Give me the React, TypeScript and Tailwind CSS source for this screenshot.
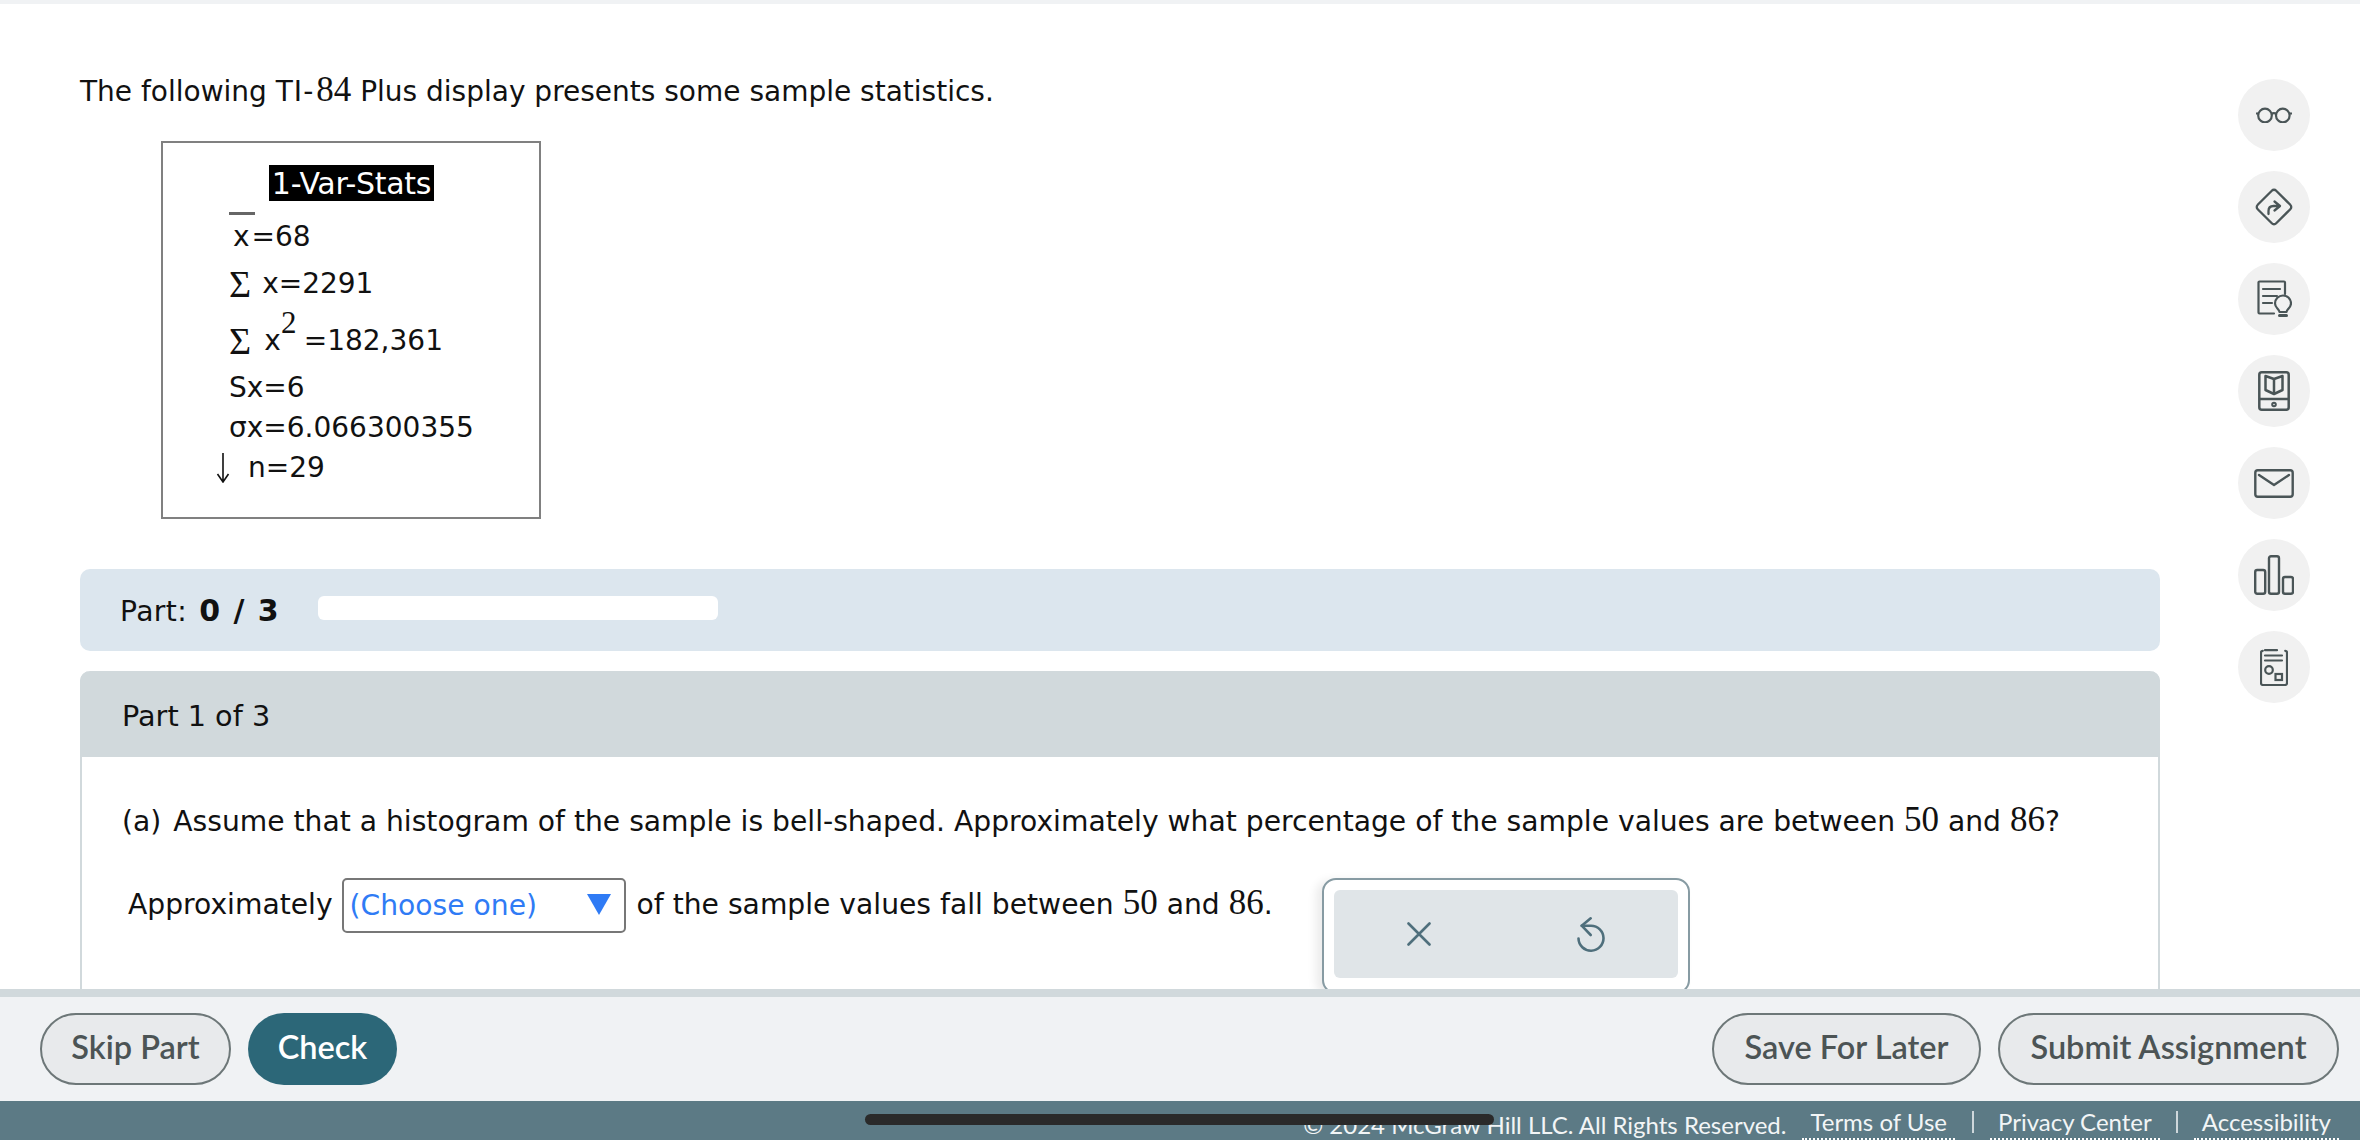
const serif = "font-['Liberation_Serif',serif]";

function Num({ children }: { children: React.ReactNode }) {
  return <span className="font-['Liberation_Serif',serif] text-[35px] leading-none">{children}</span>;
}

const stroke = "#4a5557";

const icons = [
  <svg key="a" width="36" height="16" viewBox="0 0 36 16" fill="none" stroke={stroke} strokeWidth="2.200"><circle cx="9" cy="8.500" r="6.800" /><circle cx="26.800" cy="8.500" r="6.800" /><path d="M15.500 7q2.400-1.600 4.800 0M2.500 6.500H0M33.500 6.500H36" /></svg>,
  <svg key="b" width="38" height="38" viewBox="0 0 38 38" fill="none" stroke={stroke} strokeWidth="2.300" strokeLinejoin="round" strokeLinecap="round"><path d="M16.800 2.700a3 3 0 0 1 4.400 0L35.300 16.800a3 3 0 0 1 0 4.400L21.200 35.300a3 3 0 0 1-4.400 0L2.700 21.200a3 3 0 0 1 0-4.400Z" /><path d="M13.500 26v-3q0-5 5-5h6M19.500 13.500l5.500 4.500-5.500 4.500" /></svg>,
  <svg key="c" width="35" height="38" viewBox="0 0 35 38" fill="none" stroke={stroke} strokeWidth="2.200" strokeLinecap="round" strokeLinejoin="round"><path d="M28 14V2.500a1 1 0 0 0-1-1H2.500a1 1 0 0 0-1 1V32.500a1 1 0 0 0 1 1H17" /><path d="M6 9h17M6 16h14M6 23h9" /><path d="M22.500 32c0-3-4.500-4-4.500-8.500a8 8 0 0 1 16 0c0 4.500-4.500 5.500-4.500 8.500Z" /><path d="M22.500 35.500h7" strokeWidth="3" /></svg>,
  <svg key="d" width="32" height="40" viewBox="0 0 32 40" fill="none" stroke={stroke} strokeWidth="2.500" strokeLinejoin="round"><rect x="1.300" y="1.300" width="29.400" height="37.400" rx="2.500" /><path d="M1.300 28h29.400" /><path d="M7.500 5l8.500 3 8.500-3v14l-8.500 4-8.500-4Z" /><path d="M16 8v15" /><circle cx="16" cy="33.500" r="1.800" strokeWidth="2" /></svg>,
  <svg key="e" width="40" height="29" viewBox="0 0 40 29" fill="none" stroke={stroke} strokeWidth="2.400" strokeLinecap="round" strokeLinejoin="round"><rect x="1.300" y="1.300" width="37.400" height="26.400" rx="2.500" /><path d="M5 6l15 10 15-10" /></svg>,
  <svg key="f" width="40" height="40" viewBox="0 0 40 40" fill="none" stroke={stroke} strokeWidth="2.400"><rect x="1.200" y="15" width="10" height="23.800" rx="2" /><rect x="15" y="1.200" width="10" height="37.600" rx="2" /><rect x="29" y="22" width="10" height="16.800" rx="2" /></svg>,
  <svg key="g" width="28" height="37" viewBox="0 0 28 37" fill="none" stroke={stroke} strokeWidth="2.200" strokeLinecap="round"><path d="M2.800 1.800A1.800 1.800 0 0 0 1 3.600V34a2 2 0 0 0 2 2h22a2 2 0 0 0 2-2V3.600a1.800 1.800 0 0 0-1.800-1.800" /><path d="M5 1.200h12M5 6.500h17M5 11.500h17" /><circle cx="9" cy="21" r="3.800" /><rect x="15.500" y="25" width="6.500" height="6" /></svg>,
];

function Circle({ children, first }: { children: React.ReactNode; first?: boolean }) {
  return (
    <div className={first ? "mt-[75px] flex h-[72px] w-[72px] items-center justify-center rounded-full bg-[#f1f1f1]" : "mt-[20px] flex h-[72px] w-[72px] items-center justify-center rounded-full bg-[#f1f1f1]"}>
      {children}
    </div>
  );
}

export default function App() {
  return (
    <div className="relative flex h-[1140px] w-[2360px] flex-col overflow-hidden bg-white font-['DejaVu_Sans',sans-serif] text-[28.200px] text-[#111]">
      <div className="h-[4px] shrink-0 bg-[#f0f2f4]" />
      <div className="flex min-h-0 flex-1 overflow-hidden">
        <div className="w-[2160px] shrink-0 pl-[80px]">
          <p className="mt-[63px] h-[50px] text-[28px] leading-[50px]">
            The following <span className="tracking-[1px]">TI-</span><span className="ml-[2px]"><Num>84</Num></span> Plus display presents some sample statistics.
          </p>
          <div className="ml-[81px] mt-[24px] h-[378px] w-[380px] border-2 border-[#808080] text-[28px] leading-none">
            <div className="ml-[106px] mt-[22px] h-[36px] w-[165px] whitespace-nowrap bg-black pt-[1px] text-center text-[30px] leading-[36px] text-white tracking-[-0.300px]">1-Var-Stats</div>
            <div className="relative ml-[66px] mt-[11px] h-[46px] pt-[11px]">
              <div className="absolute left-0 top-0 h-[3px] w-[26px] bg-[#666]" />
              <span className="ml-[4px]">x<span className="ml-[2px]">=68</span></span>
            </div>
            <div className="ml-[66px] mt-[3px] flex h-[46px] items-center">
              <span className={`${serif} text-[38px]`}>Σ</span><span className="ml-[11px]">x=2291</span>
            </div>
            <div className="relative ml-[66px] mt-[11px] flex h-[46px] items-center">
              <span className={`${serif} text-[38px]`}>Σ</span><span className="ml-[13px]">x</span>
              <span className="absolute left-[52px] top-[-13px] font-['Liberation_Serif',serif] text-[31px] leading-[36px]">2</span>
              <span className="ml-[23px]">=182,361</span>
            </div>
            <div className="ml-[66px] mt-[4px] h-[40px] leading-[40px]">Sx=6</div>
            <div className="ml-[66px] h-[40px] leading-[40px]">σx=6.066300355</div>
            <div className="ml-[53px] flex h-[40px] items-center">
              <svg width="14" height="30" viewBox="0 0 14 30" fill="none" stroke="#111" strokeWidth="1.600"><path d="M7 0v28M1.500 21 7 29l5.500-8" /></svg>
              <span className="ml-[18px]">n=29</span>
            </div>
          </div>
          <div className="mt-[50px] flex h-[82px] w-[2080px] items-center rounded-[10px] bg-[#dce6ee] pl-[40px]">
            <span className="pt-[2px]"><span className="tracking-[0.400px]">Part:</span> <b className="ml-[3px] text-[30px] [word-spacing:3px]">0 / 3</b></span>
            <div className="mb-[4px] ml-[39px] h-[24px] w-[400px] rounded-[6px] bg-white" />
          </div>
          <div className="mt-[20px] w-[2080px] rounded-t-[10px] border-x-2 border-[#d1d9dc]">
            <div className="-mx-[2px] flex h-[86px] items-center rounded-t-[10px] bg-[#d1d9dc] pl-[42px] pt-[6px] text-[28.700px]">Part 1 of 3</div>
            <p className="ml-[40px] mt-[40px] h-[50px] whitespace-nowrap leading-[50px]">
              (a) <span className="ml-[3px]">Assume that a histogram of the sample is bell-shaped. Approximately what percentage of the sample values are between <Num>50</Num> and <Num>86</Num>?</span>
            </p>
            <div className="mt-[31px] flex items-start">
              <span className="ml-[46px] mt-[2px] leading-[50px]">Approximately</span>
              <div className="ml-[9px] flex h-[55px] w-[284px] shrink-0 items-center justify-between rounded-[5px] border-2 border-[#777] pl-[6px] pr-[13px] text-[#2f7bf5]">
                <span className="mt-[2px]">(Choose one)</span>
                <svg width="24" height="21" viewBox="0 0 24 21" className="mt-[-2px]"><path d="M0 0h24L12 21Z" fill="#2f7bf5" /></svg>
              </div>
              <span className="ml-[11px] mt-[2px] whitespace-nowrap leading-[50px]">of the sample values fall between <Num>50</Num> and <Num>86</Num>.</span>
              <div className="ml-[49px] h-[116px] w-[368px] shrink-0 rounded-[14px] border-2 border-[#879ba3] bg-white p-[10px] shadow-[-6px_2px_10px_rgba(0,0,0,0.08)]">
                <div className="flex h-[88px] items-center rounded-[6px] bg-[#e0e5e8] pl-[73px]">
                  <svg width="24" height="24" viewBox="0 0 24 24" fill="none" stroke="#4f6f7c" strokeWidth="2.600" strokeLinecap="round"><path d="M1.500 1.500l21 21M22.500 1.500l-21 21" /></svg>
                  <svg width="30" height="36" viewBox="0 0 30 36" fill="none" stroke="#4f6f7c" strokeWidth="2.600" strokeLinecap="round" strokeLinejoin="round" className="ml-[145px]"><path d="M14.700 2.300 5.700 9.700l9 9.300" /><path d="M5.700 9.700H15A12.500 12.500 0 1 1 2.500 22.500" /></svg>
                </div>
              </div>
            </div>
          </div>
        </div>
        <div className="flex flex-1 flex-col items-start pl-[78px]">
          {icons.map((ic, i) => (
            <Circle key={i} first={i === 0}>{ic}</Circle>
          ))}
        </div>
      </div>
      <div className="h-[8px] shrink-0 bg-[#d1d9dc]" />
      <div className="flex h-[104px] shrink-0 items-start justify-between bg-[#f0f2f4] pl-[40px] pr-[21px] pt-[16px] font-['Lato',sans-serif] text-[32.500px] font-semibold">
        <div className="flex gap-[17px]">
          <div className="flex h-[72px] w-[191px] items-center justify-center rounded-[36px] border-2 border-[#6d7778] bg-[#e8eaec] pb-[3px] text-[#4c5455]">Skip Part</div>
          <div className="flex h-[72px] w-[149px] items-center justify-center rounded-[36px] bg-[#2c6778] pb-[3px] text-white">Check</div>
        </div>
        <div className="flex gap-[17px]">
          <div className="flex h-[72px] w-[269px] items-center justify-center rounded-[36px] border-2 border-[#6d7778] bg-[#e8eaec] pb-[3px] text-[#4c5455]">Save For Later</div>
          <div className="flex h-[72px] w-[341px] items-center justify-center rounded-[36px] border-2 border-[#6d7778] bg-[#e8eaec] pb-[3px] text-[#4c5455]">Submit Assignment</div>
        </div>
      </div>
      <div className="flex h-[39px] shrink-0 items-stretch justify-end bg-[#5c7a85] pr-[21px] font-['Lato',sans-serif] text-[24px] text-[#f2f5f6]">
        <span className="mr-[16px] mt-[9px] leading-[30px]">© 2024 McGraw Hill LLC. All Rights Reserved.</span>
        <span className="h-[39px] border-b-2 border-dotted border-white px-[8px] pt-[5px] leading-[32px]">Terms of Use</span>
        <span className="ml-[17px] mr-[16px] mt-[10px] h-[22px] w-[2px] bg-white/70" />
        <span className="h-[39px] border-b-2 border-dotted border-white px-[8px] pt-[5px] leading-[32px]">Privacy Center</span>
        <span className="mx-[16px] mt-[10px] h-[22px] w-[2px] bg-white/70" />
        <span className="h-[39px] border-b-2 border-dotted border-white px-[8px] pt-[5px] leading-[32px]">Accessibility</span>
      </div>
      <div className="absolute left-[865px] top-[1114px] h-[11px] w-[629px] rounded-full bg-[#2a2a2a]" />
    </div>
  );
}
